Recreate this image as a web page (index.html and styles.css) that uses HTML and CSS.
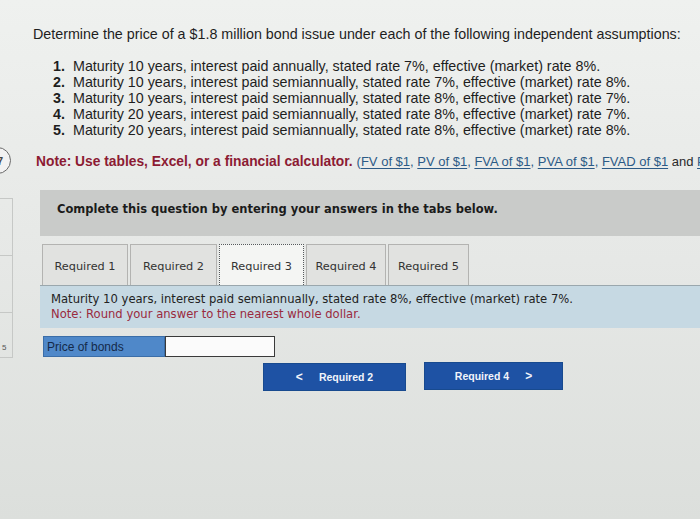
FILE: index.html
```html
<!DOCTYPE html>
<html>
<head>
<meta charset="utf-8">
<link rel="stylesheet" href="styles.css">
</head>
<body>
<div class="page">
  <aside class="side">
    <div class="qnum">7</div>
    <div class="navbox">
      <div class="navcell"></div>
      <div class="navcell"></div>
      <div class="navcell last"><span class="navnum">5</span></div>
    </div>
  </aside>
  <main class="main">
    <p class="title">Determine the price of a $1.8 million bond issue under each of the following independent assumptions:</p>
    <ol class="list">
      <li>Maturity 10 years, interest paid annually, stated rate 7%, effective (market) rate 8%.</li>
      <li>Maturity 10 years, interest paid semiannually, stated rate 7%, effective (market) rate 8%.</li>
      <li>Maturity 10 years, interest paid semiannually, stated rate 8%, effective (market) rate 7%.</li>
      <li>Maturity 20 years, interest paid semiannually, stated rate 8%, effective (market) rate 7%.</li>
      <li>Maturity 20 years, interest paid semiannually, stated rate 8%, effective (market) rate 8%.</li>
    </ol>
    <p class="note"><b>Note: Use tables, Excel, or a financial calculator.</b> <span class="links">(<a>FV of $1</a>, <a>PV of $1</a>, <a>FVA of $1</a>, <a>PVA of $1</a>, <a>FVAD of $1</a> <span class="and">and</span> <a>PVAD of $1</a>)</span></p>
    <div class="panel">
      <div class="header">Complete this question by entering your answers in the tabs below.</div>
      <div class="tabs">
        <div class="tab t1">Required 1</div>
        <div class="tab t2">Required 2</div>
        <div class="tab t3 active">Required 3</div>
        <div class="tab t4">Required 4</div>
        <div class="tab t5">Required 5</div>
      </div>
      <div class="instr">
        <div>Maturity 10 years, interest paid semiannually, stated rate 8%, effective (market) rate 7%.</div>
        <div class="red">Note: Round your answer to the nearest whole dollar.</div>
      </div>
      <div class="answer">
        <div class="label">Price of bonds</div>
        <div class="input"></div>
      </div>
      <div class="buttons">
        <div class="btn prev"><span class="chev">&lt;</span> Required 2</div>
        <div class="btn next">Required 4 <span class="chev">&gt;</span></div>
      </div>
    </div>
  </main>
</div>
</body>
</html>
```
FILE: styles.css
```css
html, body {
  margin: 0;
  padding: 0;
  width: 700px;
  height: 519px;
  overflow: hidden;
}
body {
  background: linear-gradient(180deg, #eff1ef 0%, #e6e8e6 50%, #dcdfdc 100%);
  color: #1e1e1e;
  font-family: "Liberation Sans", Arial, sans-serif;
}
.page {
  display: grid;
  grid-template-columns: 14px 1fr;
  width: 700px;
}
.side {
  position: relative;
}
.qnum {
  width: 27px;
  height: 27px;
  border: 1.5px solid #6a6a6a;
  border-radius: 50%;
  margin: 147px 0 0 -16px;
  font-size: 11px;
  font-weight: bold;
  color: #444;
  display: flex;
  align-items: center;
  justify-content: flex-end;
  padding-right: 7px;
  box-sizing: border-box;
  background: #f2f2f2;
}
.navbox {
  margin: 24px 0 0 -4px;
  width: 17px;
  height: 160px;
  border: 1px solid #c6c8c6;
  border-left: none;
  display: flex;
  flex-direction: column;
  box-sizing: border-box;
}
.navcell {
  height: 56px;
  border-bottom: 1px solid #c6c8c6;
}
.navcell.last {
  border-bottom: none;
  flex: 1;
  display: flex;
  align-items: flex-end;
  padding: 0 0 5px 6px;
}
.navnum {
  font-size: 8px;
  color: #555;
}
.main {
  min-width: 0;
}
.title {
  margin: 25px 0 0 19px;
  font-size: 14.3px;
  line-height: 18px;
  white-space: nowrap;
}
.list {
  margin: 15px 0 0 39px;
  padding: 0;
  list-style: none;
  counter-reset: item;
  font-size: 14.3px;
  line-height: 16px;
  white-space: nowrap;
}
.list li {
  counter-increment: item;
}
.list li::before {
  content: counter(item) ".";
  display: inline-block;
  width: 20px;
  font-weight: bold;
}
.note {
  margin: 14px 0 0 22px;
  font-size: 14px;
  line-height: 18px;
  white-space: nowrap;
}
.note b {
  color: #8c1b33;
  font-size: 13.8px;
}
.links {
  color: #2c5a86;
  font-size: 13px;
}
.links a {
  text-decoration: underline;
  text-underline-offset: 2px;
}
.links .and {
  color: #2a2a2a;
}
.panel {
  margin: 19px 0 0 26px;
  font-family: "DejaVu Sans", Verdana, sans-serif;
}
.header {
  height: 46px;
  background: #c9cbc9;
  box-sizing: border-box;
  padding: 12px 0 0 17px;
  font-weight: bold;
  font-size: 11.5px;
  color: #1b1b1b;
}
.tabs {
  margin: 8px 0 0 2px;
  display: flex;
  gap: 2px;
  height: 41px;
}
.tab {
  box-sizing: border-box;
  border: 1px solid #b3b3b1;
  border-bottom: none;
  background: #e1e2e0;
  font-size: 11.3px;
  color: #333;
  display: flex;
  align-items: center;
  justify-content: center;
  padding-top: 2px;
}
.t1 { width: 86px; }
.t2 { width: 87px; }
.t3 { width: 85px; }
.t4 { width: 80px; }
.t5 { width: 81px; }
.tab.active {
  background: #f4f5f3;
  border: 1.5px dotted #55595c;
  border-bottom: none;
}
.instr {
  height: 43px;
  box-sizing: border-box;
  background: #c6d9e3;
  border-top: 1px solid #9aa7ad;
  padding: 6px 0 0 11px;
  font-size: 11.6px;
  line-height: 15px;
  color: #222;
  white-space: nowrap;
}
.instr .red {
  color: #9a2a3e;
}
.answer {
  margin: 8px 0 0 3px;
  display: flex;
  height: 21px;
}
.label {
  width: 122px;
  box-sizing: border-box;
  background: #4f88c9;
  border: 1px solid #3b6ea8;
  font-family: "Liberation Sans", Arial, sans-serif;
  font-size: 12px;
  color: #142a4a;
  padding: 3px 0 0 3px;
}
.input {
  width: 110px;
  box-sizing: border-box;
  background: #fbfbfb;
  border: 1.5px solid #3a3a3a;
}
.buttons {
  margin: 6px 0 0 223px;
  display: flex;
  gap: 18px;
  align-items: flex-start;
}
.btn {
  box-sizing: border-box;
  height: 28px;
  background: #1e52a4;
  border: 1px solid #184a8f;
  color: #f1f4fa;
  font-family: "Liberation Sans", Arial, sans-serif;
  font-weight: bold;
  font-size: 10.5px;
  display: flex;
  align-items: center;
  justify-content: center;
  gap: 16px;
}
.prev { width: 143px; }
.next { width: 139px; margin-top: -1px; }
.chev {
  font-size: 12px;
}
```
